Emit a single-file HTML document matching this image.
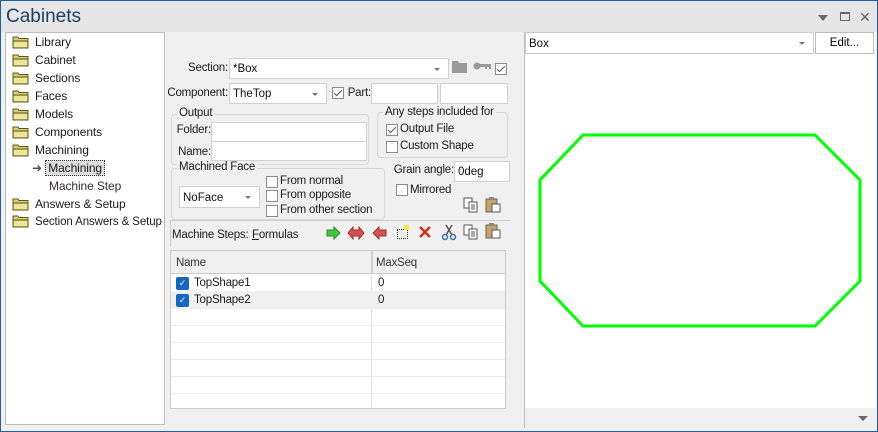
<!DOCTYPE html>
<html><head><style>
*{box-sizing:border-box;margin:0;padding:0}
body{width:878px;height:432px;overflow:hidden;font-family:"Liberation Sans",sans-serif;font-size:11.5px;color:#000;background:#f0f0f0;position:relative}
.a{position:absolute}
.win{left:0;top:0;width:878px;height:432px;border:1px solid #1e5fa8;background:#f0f0f0}
.title{left:1px;top:1px;width:876px;height:31px;background:#e6e6e6}
.tree{left:5px;top:32px;width:160px;height:393px;background:#fff;border:1px solid #bdbdbd}
.ti{position:absolute;left:6px;height:18px;font-size:12px;line-height:18px;color:#1a1a1a;white-space:nowrap;letter-spacing:-0.1px}
.ti .f{display:inline-block;vertical-align:-3px;margin-right:5px}
.lbl{font-size:11.5px;color:#1a1a1a;position:absolute;white-space:nowrap;letter-spacing:-0.2px}
.r{text-align:right}
.inp{position:absolute;background:#fff;border:1px solid #d0d0d0;font-size:11.5px;line-height:20px;padding-left:3px;color:#111}
.dd:after{content:"";position:absolute;right:8px;top:9px;border:3px solid transparent;border-top:3px solid #777}
.cb{position:absolute;width:12px;height:12px;border:1px solid #8a8a8a;background:#fff}
.cb.c:after{content:"";position:absolute;left:3px;top:0px;width:3px;height:7px;border:solid #555;border-width:0 1.5px 1.5px 0;transform:rotate(45deg)}
.grp{position:absolute;border:1px solid #d8d8d8;border-radius:4px}
.gt{position:absolute;background:#f0f0f0;padding:0 2px;font-size:11.5px;color:#1a1a1a;white-space:nowrap;letter-spacing:-0.2px}
</style></head><body>
<div class="a win"></div>
<div class="a title"></div>
<div class="a" style="left:6px;top:6px;font-size:19px;color:#1e3f66">Cabinets</div>
<div class="a" style="left:818px;top:15px;border:5px solid transparent;border-top:6px solid #666;border-bottom:0"></div>
<div class="a" style="left:840px;top:12px;width:10px;height:9px;border:1px solid #666;border-top-width:2px"></div>
<div class="a" style="left:859px;top:9px;font-size:14px;color:#666">✕</div>

<div class="a tree">
<svg width="0" height="0" style="position:absolute"><defs><symbol id="fd" viewBox="0 0 18 14"><path d="M1 2h5l1 1.5h9v9.5H1z" fill="#d8d070" stroke="#5c5a20"/><path d="M1 6h15" stroke="#5c5a20"/><path d="M2 7h13v5H2z" fill="#eee59a"/></symbol></defs></svg>
<div class="ti" style="top:0px"><svg class="f" width="18" height="14"><use href="#fd"/></svg>Library</div>
<div class="ti" style="top:18px"><svg class="f" width="18" height="14"><use href="#fd"/></svg>Cabinet</div>
<div class="ti" style="top:36px"><svg class="f" width="18" height="14"><use href="#fd"/></svg>Sections</div>
<div class="ti" style="top:54px"><svg class="f" width="18" height="14"><use href="#fd"/></svg>Faces</div>
<div class="ti" style="top:72px"><svg class="f" width="18" height="14"><use href="#fd"/></svg>Models</div>
<div class="ti" style="top:90px"><svg class="f" width="18" height="14"><use href="#fd"/></svg>Components</div>
<div class="ti" style="top:108px"><svg class="f" width="18" height="14"><use href="#fd"/></svg>Machining</div>
<div class="ti" style="top:126px;left:26px"><span style="color:#555">➜</span> <span style="border:1px dotted #333;background:#ddd;padding:0 2px">Machining</span></div>
<div class="ti" style="top:144px;left:43px;color:#3a2a3a">Machine Step</div>
<div class="ti" style="top:162px"><svg class="f" width="18" height="14"><use href="#fd"/></svg>Answers &amp; Setup</div>
<div class="ti" style="top:180px;font-size:11.5px"><svg class="f" width="18" height="14"><use href="#fd"/></svg>Section Answers &amp; Setup</div>
</div>

<div class="lbl r" style="left:160px;width:68px;top:62px">Section:</div>
<div class="inp dd" style="left:229px;top:58px;width:220px;height:21px">*Box</div>
<svg class="a" style="left:452px;top:59px" width="16" height="14"><path d="M0 2h6l1 2h8v10H0z" fill="#9a9a9a"/></svg>
<svg class="a" style="left:473px;top:62px" width="18" height="8"><circle cx="4" cy="4" r="3.5" fill="#999"/><rect x="6" y="2" width="12" height="3" fill="#999"/><rect x="12" y="5" width="2" height="2" fill="#999"/><rect x="16" y="5" width="2" height="2" fill="#999"/></svg>
<div class="cb c" style="left:495px;top:63px"></div>

<div class="lbl r" style="left:160px;width:68px;top:87px">Component:</div>
<div class="inp dd" style="left:229px;top:83px;width:98px;height:21px">TheTop</div>
<div class="cb c" style="left:332px;top:87px"></div>
<div class="lbl r" style="left:340px;width:31px;top:87px">Part:</div>
<div class="inp" style="left:371px;top:83px;width:67px;height:21px"></div>
<div class="inp" style="left:440px;top:83px;width:68px;height:21px"></div>

<div class="grp" style="left:171px;top:114px;width:198px;height:51px"></div>
<div class="gt" style="left:177px;top:107px">Output</div>
<div class="lbl r" style="left:172px;width:39px;top:124px">Folder:</div>
<div class="inp" style="left:211px;top:122px;width:156px;height:20px"></div>
<div class="lbl r" style="left:172px;width:39px;top:146px">Name:</div>
<div class="inp" style="left:211px;top:141px;width:156px;height:20px"></div>

<div class="grp" style="left:377px;top:112px;width:131px;height:46px"></div>
<div class="gt" style="left:383px;top:106px">Any steps included for</div>
<div class="cb c" style="left:386px;top:124px"></div>
<div class="lbl" style="left:400px;top:123px">Output File</div>
<div class="cb" style="left:386px;top:141px"></div>
<div class="lbl" style="left:400px;top:140px">Custom Shape</div>

<div class="grp" style="left:171px;top:168px;width:214px;height:52px"></div>
<div class="gt" style="left:177px;top:161px">Machined Face</div>
<div class="inp dd" style="left:179px;top:186px;width:81px;height:22px;line-height:22px">NoFace</div>
<div class="cb" style="left:266px;top:176px"></div><div class="lbl" style="left:280px;top:175px">From normal</div>
<div class="cb" style="left:266px;top:190px"></div><div class="lbl" style="left:280px;top:189px">From opposite</div>
<div class="cb" style="left:266px;top:205px"></div><div class="lbl" style="left:280px;top:204px">From other section</div>

<div class="lbl r" style="left:380px;width:74px;top:164px">Grain angle:</div>
<div class="inp" style="left:454px;top:161px;width:56px;height:21px">0deg</div>
<div class="cb" style="left:396px;top:184px"></div>
<div class="lbl" style="left:410px;top:184px">Mirrored</div>
<svg class="a" style="left:463px;top:197px" width="16" height="16"><rect x="1" y="1" width="8" height="10" fill="#fff" stroke="#555"/><rect x="6" y="5" width="8" height="10" fill="#fff" stroke="#555"/><path d="M8 8h4M8 10h4M8 12h4" stroke="#555"/></svg>
<svg class="a" style="left:485px;top:196px" width="16" height="17"><rect x="1" y="3" width="11" height="13" fill="#c9a46a" stroke="#665"/><rect x="4" y="1" width="5" height="3" fill="#888"/><rect x="7" y="8" width="8" height="8" fill="#fff" stroke="#555"/></svg>

<div class="a" style="left:170px;top:220px;width:340px;height:26px;border:1px solid #ccc;border-right:none;border-bottom:none;background:#f0f0f0"></div>
<div class="lbl" style="left:172px;top:229px">Machine Steps:</div>
<div class="lbl" style="left:252px;top:229px"><u>F</u>ormulas</div>
<svg class="a" style="left:326px;top:226px" width="16" height="14"><path d="M1 4h7V1l6 6-6 6V10H1z" fill="#44c444" stroke="#2a8a2a"/></svg>
<svg class="a" style="left:347px;top:226px" width="18" height="14"><path d="M1 7l5-6v3h6V1l5 6-5 6v-3H6v3z" fill="#d55050" stroke="#a03030"/></svg>
<svg class="a" style="left:371px;top:226px" width="16" height="14"><path d="M15 4H8V1L2 7l6 6V10h7z" fill="#d55050" stroke="#a03030"/></svg>
<div class="a" style="left:397px;top:229px;width:11px;height:10px;border:1px dotted #333"></div>
<div class="a" style="left:404px;top:225px;width:5px;height:5px;background:#ee4"></div>
<svg class="a" style="left:418px;top:225px" width="14" height="14"><path d="M2 2l10 10M12 2L2 12" stroke="#d0301c" stroke-width="2.5"/></svg>
<svg class="a" style="left:441px;top:224px" width="16" height="17"><path d="M5 1l6 10M11 1L5 11" stroke="#555" stroke-width="1.5"/><circle cx="4" cy="13" r="2.5" fill="none" stroke="#3a6ea8" stroke-width="1.5"/><circle cx="12" cy="13" r="2.5" fill="none" stroke="#3a6ea8" stroke-width="1.5"/></svg>
<svg class="a" style="left:463px;top:224px" width="16" height="16"><rect x="1" y="1" width="8" height="10" fill="#fff" stroke="#555"/><rect x="6" y="5" width="8" height="10" fill="#fff" stroke="#555"/><path d="M8 8h4M8 10h4M8 12h4" stroke="#555"/></svg>
<svg class="a" style="left:485px;top:222px" width="16" height="17"><rect x="1" y="3" width="11" height="13" fill="#c9a46a" stroke="#665"/><rect x="4" y="1" width="5" height="3" fill="#888"/><rect x="7" y="8" width="8" height="8" fill="#fff" stroke="#555"/></svg>

<div class="a" style="left:170px;top:250px;width:336px;height:159px;border:1px solid #ccc;background:#fff"></div>
<div class="a" style="left:171px;top:251px;width:334px;height:23px;background:#f0f0f0;border-bottom:1px solid #ccc"></div>
<div class="a" style="left:371px;top:251px;width:1px;height:157px;background:#e2e2e2"></div>
<div class="a" style="left:371px;top:251px;width:2px;height:23px;background:#d0d0d0"></div>
<div class="lbl" style="left:176px;top:257px;color:#333">Name</div>
<div class="lbl" style="left:376px;top:257px;color:#333">MaxSeq</div>
<div class="a" style="left:171px;top:291px;width:334px;height:18px;background:#f0f0f0"></div>
<div class="a" style="left:176px;top:277px;width:13px;height:13px;background:#1466c4;border-radius:2px;color:#fff;font-size:9px;text-align:center;line-height:13px">✓</div>
<div class="lbl" style="left:194px;top:277px">TopShape1</div>
<div class="lbl" style="left:378px;top:277px">0</div>
<div class="a" style="left:176px;top:294px;width:13px;height:13px;background:#1466c4;border-radius:2px;color:#fff;font-size:9px;text-align:center;line-height:13px">✓</div>
<div class="lbl" style="left:194px;top:294px">TopShape2</div>
<div class="lbl" style="left:378px;top:294px">0</div>
<div class="a" style="left:171px;top:325px;width:334px;height:1px;background:#ececec"></div>
<div class="a" style="left:171px;top:342px;width:334px;height:1px;background:#ececec"></div>
<div class="a" style="left:171px;top:359px;width:334px;height:1px;background:#ececec"></div>
<div class="a" style="left:171px;top:376px;width:334px;height:1px;background:#ececec"></div>
<div class="a" style="left:171px;top:393px;width:334px;height:1px;background:#ececec"></div>

<div class="a" style="left:524px;top:32px;width:1px;height:396px;background:#bdbdbd"></div>
<div class="a" style="left:525px;top:32px;width:351px;height:376px;background:#fff"></div>
<div class="inp dd" style="left:525px;top:32px;width:289px;height:22px;line-height:22px;border-color:#ccc">Box</div>
<div class="a" style="left:815px;top:32px;width:59px;height:22px;border:1px solid #bbb;background:#fff;text-align:center;line-height:20px;font-size:11.5px">Edit...</div>
<svg class="a" style="left:525px;top:54px" width="351" height="354"><polygon points="58,81 290,81 335,126 335,227 290,272 58,272 15,227 15,126" fill="none" stroke="#00ff00" stroke-width="3"/></svg>
<div class="a" style="left:858px;top:416px;border:5px solid transparent;border-top:5px solid #666;border-bottom:0"></div>
</body></html>
